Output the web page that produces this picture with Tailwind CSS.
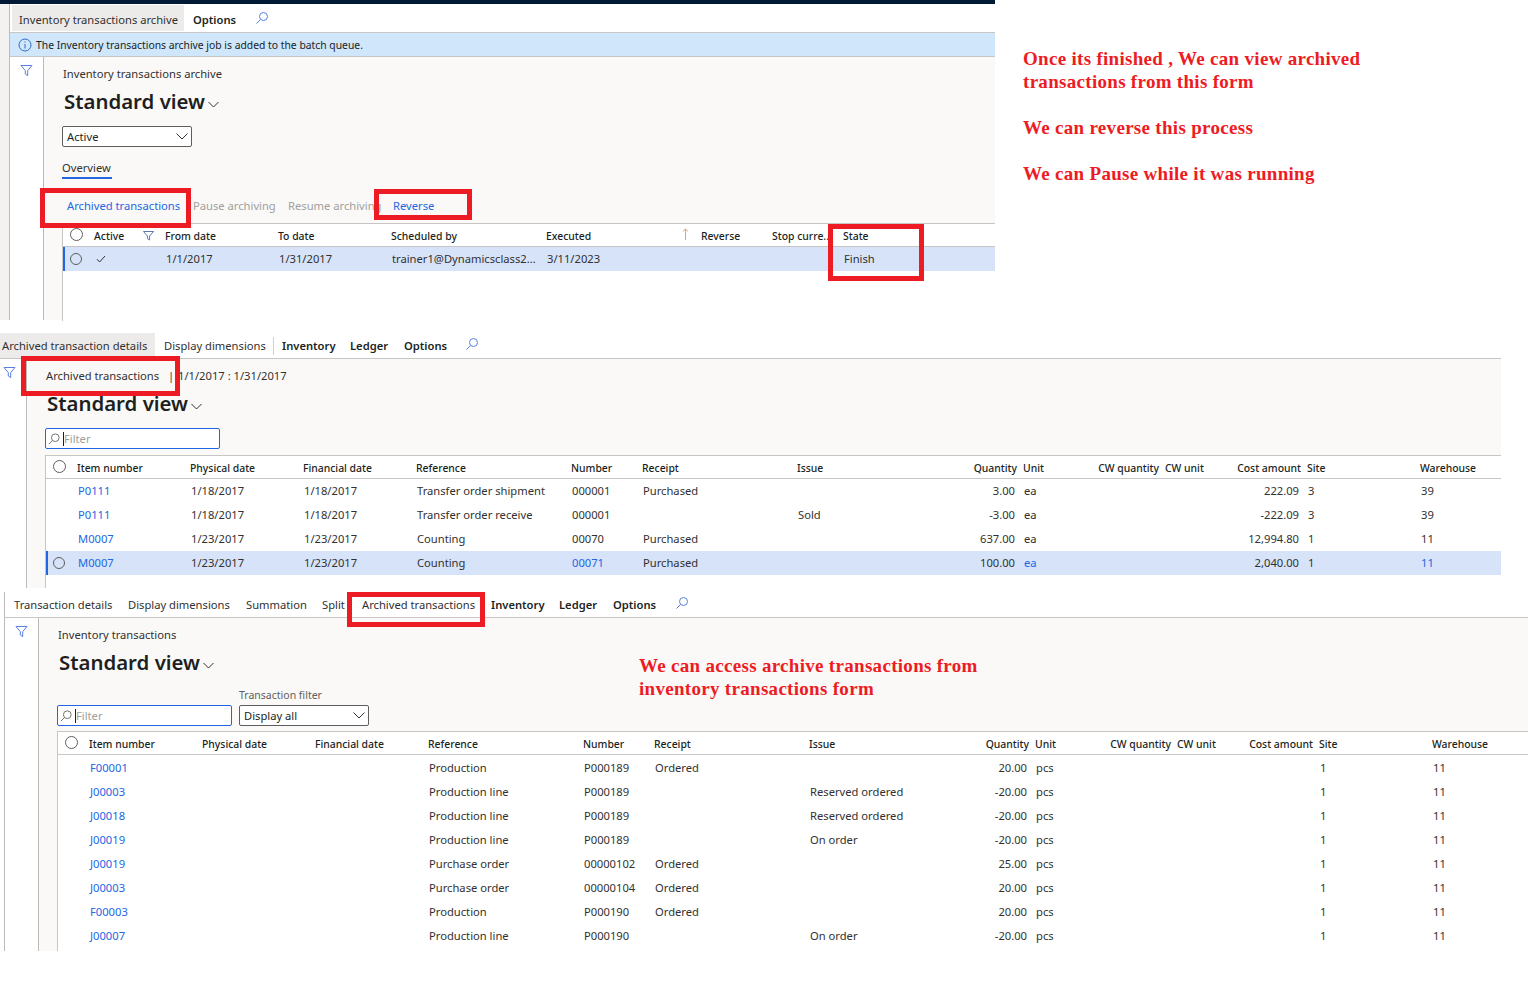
<!DOCTYPE html>
<html lang="en">
<head>
    <meta charset="UTF-8">
    <title>Inventory transactions archive</title>
    <script src="https://cdn.jsdelivr.net/npm/@tailwindcss/browser@4"></script>
</head>
<body class="bg-white font-['Noto_Sans',sans-serif] text-[11.2px] text-[#323130] overflow-hidden">
<div class="relative w-[1528px] h-[983px] overflow-hidden">

    <!-- Archive form -->
    <section class="absolute left-0 top-0 w-[995px] h-[320px] flex flex-col">
        <div class="h-[4px] bg-[#001a36] shrink-0"></div>
        <div class="flex flex-1 min-h-0">
            <div class="w-[10px] bg-[#f3f2f1] border-r border-[#bdbbb9]"></div>
            <div class="flex-1 flex flex-col min-w-0">
                <div class="h-[29px] flex items-center border-b border-[#c8c6c4] shrink-0">
                    <div class="ml-[2px] w-[172px] h-[26px] bg-[#edebe9] flex items-center pl-[7px] pt-[4px]">Inventory transactions archive</div>
                    <div class="ml-[9px] w-[62px] pt-[4px] font-semibold text-[#201f1e]">Options</div>
                    <svg class="w-[14px] h-[14px] text-[#5b7fe0]" viewBox="0 0 14 14" fill="none" stroke="currentColor"><circle cx="8.5" cy="5.5" r="4"/><path d="M5.6 8.4 1.5 12.5"/></svg>
                </div>
                <div class="h-[24px] bg-[#cfe6fb] border-b border-[#c8c6c4] flex items-center pl-[8px] gap-[4px] shrink-0 text-[10.35px] text-[#201f1e]">
                    <svg class="w-[14px] h-[14px] text-[#2f6fc4]" viewBox="0 0 14 14" fill="none" stroke="currentColor"><circle cx="7" cy="7" r="6"/><path d="M7 6v4.5M7 3.5v1.2"/></svg>
                    <span class="pt-[2px]">The Inventory transactions archive job is added to the batch queue.</span>
                </div>
                <div class="flex flex-1 min-h-0">
                    <div class="w-[34px] bg-white border-r border-[#bdbbb9] flex justify-center pt-[7px] shrink-0">
                        <svg class="w-[13px] h-[13px] text-[#5b7fe0]" viewBox="0 0 13 13" fill="none" stroke="currentColor"><path d="M1 1.5h11L7.7 6.6v5L5.3 10V6.6z"/></svg>
                    </div>
                    <div class="flex-1 bg-[#faf9f8] flex flex-col min-w-0">
                        <div class="pl-[19px] mt-[7px] h-[20px] flex items-center">Inventory transactions archive</div>
                        <div class="pl-[20px] mt-[4px] h-[28px] flex items-center text-[#201f1e]">
                            <span class="text-[20.4px] font-semibold leading-none -mt-[2px]">Standard view</span>
                            <svg class="w-[11px] h-[7px] ml-[3px] mt-[5px]" viewBox="0 0 11 7" fill="none" stroke="#323130"><path d="M.5 1 5.5 6l5-5"/></svg>
                        </div>
                        <div class="ml-[18px] mt-[10px] w-[130px] h-[21px] bg-white border border-[#605e5c] rounded-[2px] flex items-center justify-between pl-[4px] pr-[3px] text-[#201f1e]">
                            <span class="pt-[2px]">Active</span>
                            <svg class="w-[12px] h-[7px]" viewBox="0 0 12 7" fill="none" stroke="#323130"><path d="M.5 .5 6 6l5.5-5.5"/></svg>
                        </div>
                        <div class="ml-[18px] mt-[11px] w-[50px] h-[21px] border-b-2 border-[#2266e3] text-[#323130] flex items-start pt-[2px]">Overview</div>
                        <div class="mt-[16px] h-[22px] flex items-center shrink-0 whitespace-nowrap">
                            <span class="ml-[23px] w-[126px] text-[#2266e3]">Archived transactions</span>
                            <span class="w-[95px] text-[#a19f9d]">Pause archiving</span>
                            <span class="w-[105px] text-[#a19f9d] overflow-hidden">Resume archiving</span>
                            <span class="text-[#2266e3]">Reverse</span>
                        </div>
                        <div class="ml-[18px] mt-[6px] flex-1 bg-white border-l border-[#c8c6c4] -mb-px">
                            <div class="-ml-[19px] border-t border-[#c8c6c4]"></div>
                            <div class="h-[23px] pt-[4px] grid grid-cols-[31px_71px_113px_113px_155px_155px_71px_71px_1fr] items-center border-b border-[#c8c6c4] font-medium text-[10.4px] text-[#201f1e]">
                                <span class="ml-[7px] -mt-[6px] w-[13px] h-[13px] rounded-full border border-[#605e5c]"></span>
                                <span class="flex justify-between pr-[11px]">Active
                                    <svg class="self-center -mt-[2px] w-[11px] h-[10px]" viewBox="0 0 11 10" fill="none" stroke="#5f78a8"><path d="M.5.5h10L6.6 5v4L4.4 7.7V5z"/></svg>
                                </span>
                                <span>From date</span><span>To date</span><span>Scheduled by</span>
                                <span class="flex justify-between pr-[12px]">Executed
                                    <svg class="self-center -mt-[6px] w-[7px] h-[12px]" viewBox="0 0 7 12" fill="none" stroke="#d9a679"><path d="M3.5 12V1M.8 3.5 3.5 1l2.7 2.5"/></svg>
                                </span>
                                <span>Reverse</span><span class="whitespace-nowrap">Stop curre..</span><span>State</span>
                            </div>
                            <div class="h-[24px] grid grid-cols-[31px_71px_113px_113px_155px_155px_71px_71px_1fr] items-center bg-[#d6e3f9] shadow-[inset_2px_0_0_#2266e3]">
                                <span class="ml-[7px] w-[12px] h-[12px] rounded-full border border-[#605e5c]"></span>
                                <span><svg class="ml-[2px] w-[10px] h-[8px]" viewBox="0 0 10 8" fill="none" stroke="#323130"><path d="M1 4.2 3.6 7 9 1"/></svg></span>
                                <span class="pl-[1px]">1/1/2017</span><span class="pl-[1px]">1/31/2017</span><span class="pl-[1px]">trainer1@Dynamicsclass2...</span><span class="pl-[1px]">3/11/2023</span><span></span><span></span><span class="pl-[1px]">Finish</span>
                            </div>
                        </div>
                    </div>
                </div>
            </div>
        </div>
    </section>

    <!-- Archived transaction details -->
    <section class="absolute left-0 top-[333px] w-[1501px] h-[255px] flex flex-col">
        <div class="h-[26px] flex items-center border-b border-[#c8c6c4] shrink-0">
            <div class="w-[155px] h-[25px] bg-[#edebe9] flex items-center pl-[2px] pt-[2px] whitespace-nowrap">Archived transaction details</div>
            <div class="ml-[9px] w-[109px] pt-[2px]">Display dimensions</div>
            <div class="w-px h-[18px] bg-[#d2d0ce]"></div>
            <div class="ml-[8px] w-[68px] pt-[2px] font-semibold text-[#201f1e]">Inventory</div>
            <div class="w-[54px] pt-[2px] font-semibold text-[#201f1e]">Ledger</div>
            <div class="w-[61px] pt-[2px] font-semibold text-[#201f1e]">Options</div>
            <svg class="w-[14px] h-[14px] -mt-[3px] text-[#5b7fe0]" viewBox="0 0 14 14" fill="none" stroke="currentColor"><circle cx="8.5" cy="5.5" r="4"/><path d="M5.6 8.4 1.5 12.5"/></svg>
        </div>
        <div class="flex flex-1 min-h-0">
            <div class="w-[27px] bg-white border-r border-[#bdbbb9] flex justify-center pt-[7px] shrink-0">
                <svg class="w-[13px] h-[13px] -ml-[8px] text-[#5b7fe0]" viewBox="0 0 13 13" fill="none" stroke="currentColor"><path d="M1 1.5h11L7.7 6.6v5L5.3 10V6.6z"/></svg>
            </div>
            <div class="flex-1 bg-[#faf9f8] flex flex-col min-w-0">
                <div class="pl-[19px] mt-[7px] h-[20px] flex items-center whitespace-nowrap"><span class="w-[122px]">Archived transactions</span><span class="w-[10px]">|</span><span>1/1/2017 : 1/31/2017</span></div>
                <div class="pl-[20px] mt-[4px] h-[28px] flex items-center text-[#201f1e]">
                    <span class="text-[20.4px] font-semibold leading-none -mt-[2px]">Standard view</span>
                    <svg class="w-[11px] h-[7px] ml-[3px] mt-[5px]" viewBox="0 0 11 7" fill="none" stroke="#323130"><path d="M.5 1 5.5 6l5-5"/></svg>
                </div>
                <div class="ml-[18px] mt-[10px] w-[175px] h-[21px] bg-white border border-[#2266e3] rounded-[2px] flex items-center pl-[2px] text-[#a19f9d] shrink-0">
                    <svg class="w-[12px] h-[12px] text-[#605e5c]" viewBox="0 0 14 14" fill="none" stroke="currentColor"><circle cx="8.5" cy="5.5" r="4.5"/><path d="M5.3 8.7 1 13"/></svg>
                    <span class="w-px h-[14px] bg-[#201f1e] ml-[3px]"></span><span class="pt-[2px]">Filter</span>
                </div>
                <div id="detailsTable" class="ml-[18px] mt-[6px] flex-1 bg-white border-l border-[#c8c6c4] border-t"></div>
            </div>
        </div>
    </section>

    <!-- Inventory transactions -->
    <section class="absolute left-[4px] top-[592px] w-[1524px] h-[359px] flex flex-col border-l border-[#bdbbb9]">
        <div class="h-[26px] flex items-center border-b border-[#c8c6c4] shrink-0 whitespace-nowrap">
            <div class="ml-[9px] w-[114px] pt-[2px]">Transaction details</div>
            <div class="w-[118px] pt-[2px]">Display dimensions</div>
            <div class="w-[76px] pt-[2px]">Summation</div>
            <div class="w-[40px] pt-[2px]">Split</div>
            <div class="w-[129px] pt-[2px]">Archived transactions</div>
            <div class="w-[68px] pt-[2px] font-semibold text-[#201f1e]">Inventory</div>
            <div class="w-[54px] pt-[2px] font-semibold text-[#201f1e]">Ledger</div>
            <div class="w-[62px] pt-[2px] font-semibold text-[#201f1e]">Options</div>
            <svg class="w-[14px] h-[14px] -mt-[4px] text-[#5b7fe0]" viewBox="0 0 14 14" fill="none" stroke="currentColor"><circle cx="8.5" cy="5.5" r="4"/><path d="M5.6 8.4 1.5 12.5"/></svg>
        </div>
        <div class="flex flex-1 min-h-0">
            <div class="w-[34px] bg-white border-r border-[#bdbbb9] flex justify-center pt-[7px] shrink-0">
                <svg class="w-[13px] h-[13px] text-[#5b7fe0]" viewBox="0 0 13 13" fill="none" stroke="currentColor"><path d="M1 1.5h11L7.7 6.6v5L5.3 10V6.6z"/></svg>
            </div>
            <div class="flex-1 bg-[#faf9f8] flex flex-col min-w-0">
                <div class="pl-[19px] mt-[7px] h-[20px] flex items-center">Inventory transactions</div>
                <div class="pl-[20px] mt-[4px] h-[28px] flex items-center text-[#201f1e]">
                    <span class="text-[20.4px] font-semibold leading-none -mt-[2px]">Standard view</span>
                    <svg class="w-[11px] h-[7px] ml-[3px] mt-[5px]" viewBox="0 0 11 7" fill="none" stroke="#323130"><path d="M.5 1 5.5 6l5-5"/></svg>
                </div>
                <div class="ml-[18px] mt-[11px] flex items-end gap-[7px] shrink-0">
                    <div class="w-[175px] h-[21px] bg-white border border-[#2266e3] rounded-[2px] flex items-center pl-[2px] text-[#a19f9d]">
                        <svg class="w-[12px] h-[12px] text-[#605e5c]" viewBox="0 0 14 14" fill="none" stroke="currentColor"><circle cx="8.5" cy="5.5" r="4.5"/><path d="M5.3 8.7 1 13"/></svg>
                        <span class="w-px h-[14px] bg-[#201f1e] ml-[3px]"></span><span class="pt-[2px]">Filter</span>
                    </div>
                    <div>
                        <div class="h-[17px] text-[10.5px] text-[#605e5c] leading-[14px]">Transaction filter</div>
                        <div class="w-[130px] h-[21px] bg-white border border-[#605e5c] rounded-[2px] flex items-center justify-between pl-[4px] pr-[3px] text-[#201f1e]">
                            <span class="pt-[2px]">Display all</span>
                            <svg class="w-[12px] h-[7px]" viewBox="0 0 12 7" fill="none" stroke="#323130"><path d="M.5 .5 6 6l5.5-5.5"/></svg>
                        </div>
                    </div>
                </div>
                <div id="transTable" class="ml-[18px] mt-[5px] flex-1 bg-white border-l border-[#c8c6c4] border-t overflow-hidden"></div>
            </div>
        </div>
    </section>

    <!-- Notes -->
    <div class="absolute left-[1023px] top-[47px] w-[345px] font-['Liberation_Serif',serif] font-bold text-[19px] leading-[23px] tracking-[0.3px] text-[#ed1c24]">
        <p>Once its finished , We can view archived transactions from this form</p>
        <p class="mt-[23px]">We can reverse this process</p>
        <p class="mt-[23px]">We can Pause while it was running</p>
    </div>
    <div class="absolute left-[639px] top-[654px] w-[350px] font-['Liberation_Serif',serif] font-bold text-[19px] leading-[23px] tracking-[0.3px] text-[#ed1c24]">
        We can access archive transactions from inventory transactions form
    </div>

    <!-- Red callouts -->
    <div class="absolute left-[40px] top-[188px] w-[151px] h-[40px] border-[5px] border-[#ed1c24]"></div>
    <div class="absolute left-[374px] top-[189px] w-[98px] h-[31px] border-[5px] border-[#ed1c24]"></div>
    <div class="absolute left-[828px] top-[224px] w-[96px] h-[57px] border-[5px] border-[#ed1c24]"></div>
    <div class="absolute left-[21px] top-[356px] w-[159px] h-[40px] border-[5px] border-[#ed1c24]"></div>
    <div class="absolute left-[347px] top-[592px] w-[138px] h-[35px] border-[5px] border-[#ed1c24]"></div>
</div>

<script>
    const headers = `
        <div class="h-[23px] pt-[4px] grid grid-cols-[31px_113px_113px_113px_155px_71px_155px_120px_106px_40px_102px_40px_102px_113px_1fr] items-center border-b border-[#c8c6c4] font-medium text-[10.4px] text-[#201f1e] whitespace-nowrap">
            <span class="ml-[7px] -mt-[6px] w-[13px] h-[13px] rounded-full border border-[#605e5c]"></span>
            <span>Item number</span><span>Physical date</span><span>Financial date</span><span>Reference</span><span>Number</span><span>Receipt</span><span>Issue</span>
            <span class="text-right pr-[6px]">Quantity</span><span>Unit</span>
            <span class="text-right pr-[6px]">CW quantity</span><span>CW unit</span>
            <span class="text-right pr-[6px]">Cost amount</span><span>Site</span><span>Warehouse</span>
        </div>`;

    function rowHtml(r) {
        const selected = r.selected;
        const link = 'text-[#2266e3]';
        return `
        <div class="h-[24px] grid grid-cols-[31px_113px_113px_113px_155px_71px_155px_120px_106px_40px_102px_40px_102px_113px_1fr] items-center whitespace-nowrap ${selected ? 'bg-[#d6e3f9] shadow-[inset_2px_0_0_#2266e3]' : ''}">
            <span>${selected ? '<span class="block ml-[7px] w-[12px] h-[12px] rounded-full border border-[#605e5c]"></span>' : ''}</span>
            <span class="pl-[1px] ${link}">${r.item}</span>
            <span class="pl-[1px]">${r.phys}</span><span class="pl-[1px]">${r.fin}</span><span class="pl-[1px]">${r.ref}</span>
            <span class="pl-[1px] ${selected ? link : ''}">${r.num}</span>
            <span class="pl-[1px]">${r.rec}</span><span class="pl-[1px]">${r.issue}</span>
            <span class="text-right pr-[8px]">${r.qty}</span>
            <span class="pl-[1px] ${selected ? link : ''}">${r.unit}</span>
            <span></span><span></span>
            <span class="text-right pr-[8px]">${r.cost}</span>
            <span class="pl-[1px]">${r.site}</span>
            <span class="pl-[1px] ${selected ? link : ''}">${r.wh}</span>
        </div>`;
    }

    const details = [
        { item: 'P0111', phys: '1/18/2017', fin: '1/18/2017', ref: 'Transfer order shipment', num: '000001', rec: 'Purchased', issue: '', qty: '3.00', unit: 'ea', cost: '222.09', site: '3', wh: '39' },
        { item: 'P0111', phys: '1/18/2017', fin: '1/18/2017', ref: 'Transfer order receive', num: '000001', rec: '', issue: 'Sold', qty: '-3.00', unit: 'ea', cost: '-222.09', site: '3', wh: '39' },
        { item: 'M0007', phys: '1/23/2017', fin: '1/23/2017', ref: 'Counting', num: '00070', rec: 'Purchased', issue: '', qty: '637.00', unit: 'ea', cost: '12,994.80', site: '1', wh: '11' },
        { item: 'M0007', phys: '1/23/2017', fin: '1/23/2017', ref: 'Counting', num: '00071', rec: 'Purchased', issue: '', qty: '100.00', unit: 'ea', cost: '2,040.00', site: '1', wh: '11', selected: true },
    ];

    const trans = [
        ['F00001', 'Production', 'P000189', 'Ordered', '', '20.00'],
        ['J00003', 'Production line', 'P000189', '', 'Reserved ordered', '-20.00'],
        ['J00018', 'Production line', 'P000189', '', 'Reserved ordered', '-20.00'],
        ['J00019', 'Production line', 'P000189', '', 'On order', '-20.00'],
        ['J00019', 'Purchase order', '00000102', 'Ordered', '', '25.00'],
        ['J00003', 'Purchase order', '00000104', 'Ordered', '', '20.00'],
        ['F00003', 'Production', 'P000190', 'Ordered', '', '20.00'],
        ['J00007', 'Production line', 'P000190', '', 'On order', '-20.00'],
    ].map(([item, ref, num, rec, issue, qty]) => ({ item, phys: '', fin: '', ref, num, rec, issue, qty, unit: 'pcs', cost: '', site: '1', wh: '11' }));

    document.getElementById('detailsTable').innerHTML = headers + details.map(rowHtml).join('');
    document.getElementById('transTable').innerHTML = headers + '<div class="pt-[1px]">' + trans.map(rowHtml).join('') + '</div>';
</script>
</body>
</html>
